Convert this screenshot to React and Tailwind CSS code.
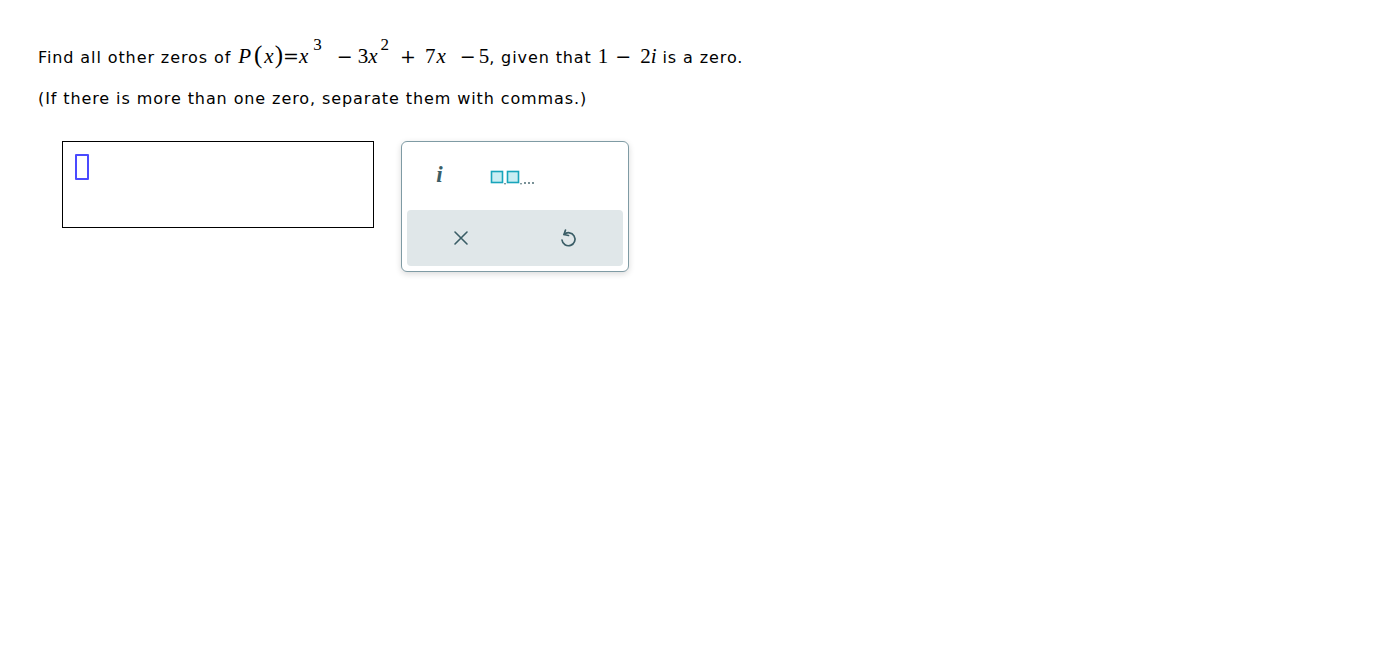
import React from "react";

const M = ({ children, className = "" }) => (
  <span className={"font-['Liberation_Serif',serif] tracking-normal " + className}>{children}</span>
);
const Op = ({ children, className = "" }) => (
  <span className={"font-['DejaVu_Serif',serif] text-[19px] font-light tracking-normal " + className}>{children}</span>
);

export default function App() {
  return (
    <div className="min-h-[645px] w-[1383px] bg-white font-['DejaVu_Sans',sans-serif] text-[16px] tracking-[0.9px] text-black">
      <div className="pl-[38px] pt-[36px]">
        <p className="flex h-[34px] items-baseline whitespace-pre text-[16px]">
          <span>Find all other zeros of </span>
          <M className="ml-[1px] text-[21px] italic">P</M>
          <M className="ml-[3px] text-[25px]">(</M>
          <M className="ml-[2px] text-[21px] italic">x</M>
          <M className="ml-[1px] text-[25px]">)</M>
          <Op className="ml-[0px]">=</Op>
          <M className="ml-[0px] text-[21px] italic">x</M>
          <M className="relative -top-[13px] ml-[5px] text-[17px]">3</M>
          <Op className="ml-[15px]">−</Op>
          <M className="ml-[5px] text-[21px]">3</M>
          <M className="text-[21px] italic">x</M>
          <M className="relative -top-[13px] ml-[3px] text-[17px]">2</M>
          <Op className="ml-[11px]">+</Op>
          <M className="ml-[9px] text-[21px]">7</M>
          <M className="ml-[1px] text-[21px] italic">x</M>
          <Op className="ml-[14px]">−</Op>
          <M className="ml-[3px] text-[21px]">5</M>
          <span>, given that </span>
          <M className="text-[21px]">1</M>
          <Op className="ml-[7px]">−</Op>
          <M className="ml-[9px] text-[21px]">2</M>
          <M className="text-[21px] italic">i</M>
          <span> is a zero.</span>
        </p>
        <p className="mt-[19px] h-[20px] leading-[20px]">(If there is more than one zero, separate them with commas.)</p>
      </div>

      <div className="mt-[32px] flex items-start pl-[62px]">
        <div className="h-[87px] w-[312px] border border-black pl-[12px] pt-[12px]">
          <div className="h-[26px] w-[14px] rounded-[1px] border-2 border-[#4a4aff]" />
        </div>
        <div className="ml-[27px] w-[228px] rounded-[6px] border border-[#7f9ba4] bg-white p-[5px] shadow-[0_2px_6px_rgba(0,0,0,0.15)]">
          <div className="flex h-[63px] items-center pb-[6px]">
            <div className="flex w-[66px] justify-center">
              <span className="font-['Liberation_Serif',serif] text-[23px] font-bold italic text-[#3a5d66]">i</span>
            </div>
            <div className="ml-[17px] flex items-end pt-[2px]">
              <svg width="50" height="16" viewBox="0 0 50 16">
                <rect x="1.5" y="2.5" width="11" height="11" fill="#c9eef3" stroke="#18a5bb" strokeWidth="1.6" />
                <circle cx="15" cy="14.8" r="0.8" fill="#3a5d66" />
                <rect x="17.5" y="2.5" width="11" height="11" fill="#c9eef3" stroke="#18a5bb" strokeWidth="1.6" />
                <circle cx="31" cy="14.8" r="0.8" fill="#3a5d66" />
                <circle cx="35" cy="14" r="0.9" fill="#3a5d66" />
                <circle cx="39" cy="14" r="0.9" fill="#3a5d66" />
                <circle cx="43" cy="14" r="0.9" fill="#3a5d66" />
              </svg>
            </div>
          </div>
          <div className="flex h-[56px] items-center rounded-[4px] bg-[#e0e7e9]">
            <div className="flex w-[107px] justify-center">
              <svg width="16" height="16" viewBox="0 0 16 16" fill="none" stroke="#3a5d66" strokeWidth="1.6" strokeLinecap="round">
                <path d="M2 2L14 14M14 2L2 14" />
              </svg>
            </div>
            <div className="flex w-[107px] justify-center">
              <svg width="18" height="20" viewBox="0 0 18 20" fill="none" stroke="#3a5d66" strokeWidth="1.7" strokeLinecap="round" strokeLinejoin="round">
                <path d="M5 6.5A6.5 6.5 0 1 1 3 12" />
                <path d="M6.5 2L5 6.5L9.5 7.5" />
              </svg>
            </div>
          </div>
        </div>
      </div>
    </div>
  );
}
